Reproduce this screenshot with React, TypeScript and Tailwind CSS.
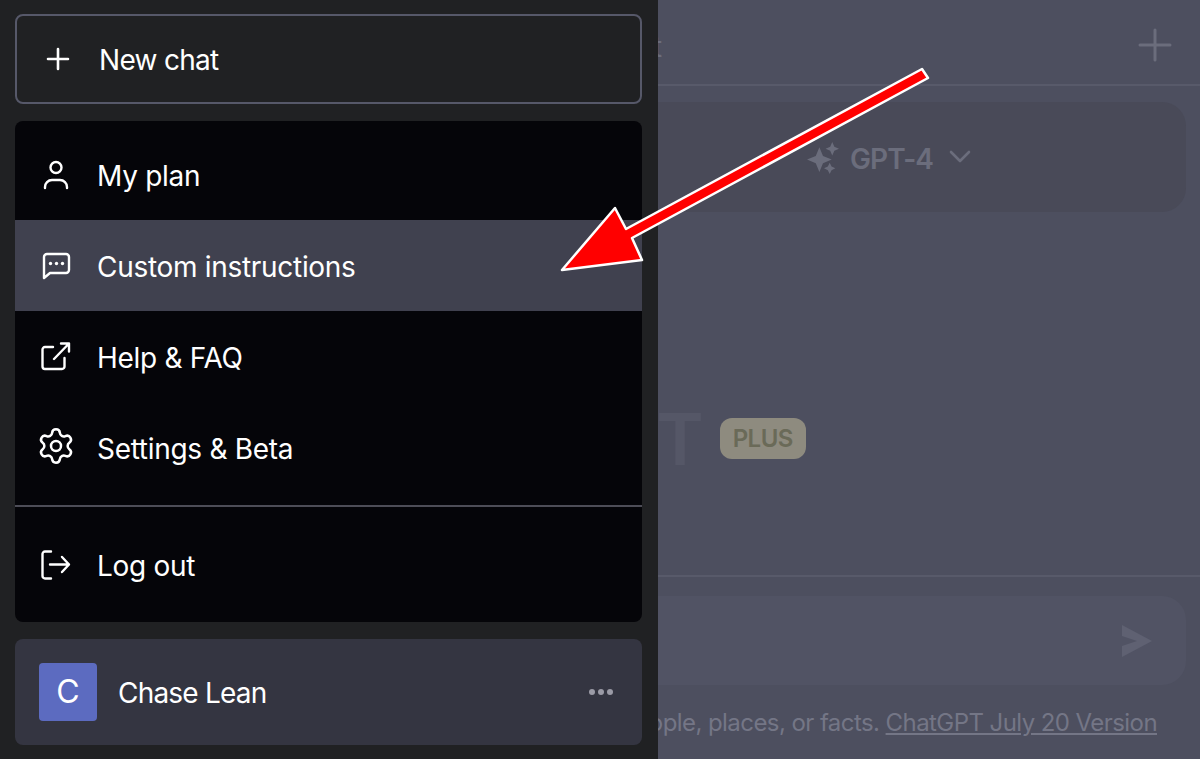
import React from 'react'
import { Settings } from 'lucide-react'

const iconProps = {
  width: 30,
  height: 30,
  viewBox: '0 0 30 30',
  fill: 'none',
  stroke: 'currentColor',
  strokeWidth: 2.4,
  strokeLinecap: 'round' as const,
  strokeLinejoin: 'round' as const
}

const PersonIcon = () => (
  <svg {...iconProps}>
    <circle cx="15" cy="7.500" r="5.500" />
    <path d="M4 28v-1a7 7 0 0 1 7-7h8a7 7 0 0 1 7 7v1" />
  </svg>
)

const ChatIcon = () => (
  <svg {...iconProps}>
    <path d="M3 27V6a3 3 0 0 1 3-3h19a3 3 0 0 1 3 3v13a3 3 0 0 1-3 3H9z" />
    <circle cx="9.500" cy="12.500" r="1.700" fill="currentColor" stroke="none" />
    <circle cx="15.500" cy="12.500" r="1.700" fill="currentColor" stroke="none" />
    <circle cx="21.500" cy="12.500" r="1.700" fill="currentColor" stroke="none" />
  </svg>
)

const ExternalIcon = () => (
  <svg {...iconProps}>
    <path d="M12 5H4a2.500 2.500 0 0 0-2.500 2.500v17A2.500 2.500 0 0 0 4 27h17a2.500 2.500 0 0 0 2.500-2.500V16" />
    <path d="M13 17L28 1.500M20 1.500h8v8" />
  </svg>
)

const LogoutIcon = () => (
  <svg {...iconProps}>
    <path d="M10 1.500H4A2.500 2.500 0 0 0 1.500 4v22A2.500 2.500 0 0 0 4 28.500h6" />
    <path d="M9 14.500h19M21 7l7 7.500-7 7.500" />
  </svg>
)

const menuItems = [
  { label: 'My plan', icon: <PersonIcon /> },
  { label: 'Custom instructions', icon: <ChatIcon />, active: true },
  { label: 'Help & FAQ', icon: <ExternalIcon /> },
  { label: 'Settings & Beta', icon: <Settings size={40} strokeWidth={1.5} className="-mx-1 -mt-[3px] shrink-0" /> }
]

function MenuRow({ label, icon, active }: { label: string; icon: React.ReactNode; active?: boolean }) {
  return (
    <div className={`flex h-[91px] items-center gap-[26px] pl-[26px] ${active ? 'bg-[#40414f]' : ''}`}>
      <span className="flex w-[30px] justify-center">{icon}</span>
      <span className="pt-[2px] text-[28px] tracking-[-0.3px] text-white">{label}</span>
    </div>
  )
}

function Sidebar() {
  return (
    <aside className="relative z-10 flex h-full w-[658px] shrink-0 flex-col bg-[#202123] pl-[15px] pr-[16px] pt-[14px]">
      <div className="flex h-[90px] items-center gap-[29px] rounded-lg border-2 border-[#565869] pl-[29px] text-white">
        <svg width="24" height="24" viewBox="0 0 24 24" stroke="currentColor" strokeWidth="2.6" strokeLinecap="round">
          <path d="M12 2v20M2 12h20" />
        </svg>
        <span className="pt-[2px] text-[28px] tracking-[-0.7px]">New chat</span>
      </div>

      <div className="mt-[17px] flex h-[501px] flex-col overflow-hidden rounded-lg bg-[#050509] pt-[8px] text-white">
        {menuItems.map((item) => (
          <MenuRow key={item.label} {...item} />
        ))}
        <div className="mt-[12px] mb-[12px] h-[2px] bg-[#4d4d57]" />
        <MenuRow label="Log out" icon={<LogoutIcon />} />
      </div>

      <div className="mt-[17px] flex h-[106px] items-center rounded-lg bg-[#343541] pl-[24px] pr-[29px] text-white">
        <div className="flex h-[58px] w-[58px] items-center justify-center rounded-sm bg-[#5c6bc0] text-[32px]">C</div>
        <span className="ml-[21px] flex-1 pt-[2px] text-[28px] tracking-[-0.8px]">Chase Lean</span>
        <div className="flex gap-[3px]">
          <span className="h-[6px] w-[6px] rounded-full bg-[#9b9ba6]" />
          <span className="h-[6px] w-[6px] rounded-full bg-[#9b9ba6]" />
          <span className="h-[6px] w-[6px] rounded-full bg-[#9b9ba6]" />
        </div>
      </div>
    </aside>
  )
}

function Main() {
  return (
    <main className="flex h-full min-w-0 flex-1 flex-col overflow-hidden bg-[#4d4f5f]">
      <header className="flex h-[86px] shrink-0 items-center justify-between border-b-2 border-[#585a6a] pr-[28px] text-[#6b6d7c]">
        <span className="-ml-[116px] mt-[10px] text-[28px] tracking-[-0.7px] whitespace-nowrap">New chat</span>
        <svg width="34" height="34" viewBox="0 0 34 34" stroke="currentColor" strokeWidth="3" strokeLinecap="round" className="mt-[6px]">
          <path d="M17 2v30M2 17h30" />
        </svg>
      </header>

      <div className="mr-[14px] -ml-[60px] mt-[16px] flex h-[110px] shrink-0 items-center gap-[10px] rounded-3xl bg-[#494a58] pl-[209px] text-[#6b6d7c]">
        <svg width="33" height="33" viewBox="0 0 32 32" fill="currentColor" className="mt-[1px]">
          <path d="M12 6l3.500 8.500L24 18l-8.500 3.500L12 30l-3.500-8.500L0 18l8.500-3.500z" />
          <path d="M24.500 1l2 4.500 4.500 2-4.500 2-2 4.500-2-4.500-4.500-2 4.500-2z" />
          <path d="M22 21l1.800 3.700 3.700 1.800-3.700 1.800-1.800 3.700-1.800-3.700-3.700-1.800 3.700-1.800z" />
        </svg>
        <span className="pt-[4px] text-[28px] font-semibold tracking-[-0.9px]">GPT-4</span>
        <svg width="22" height="14" viewBox="0 0 22 14" fill="none" stroke="currentColor" strokeWidth="2.6" strokeLinecap="round" strokeLinejoin="round" className="ml-[6px]">
          <path d="M2 2l9 9 9-9" />
        </svg>
      </div>

      <div className="flex flex-1 items-center pt-[90px]">
        <span className="-ml-[260px] text-[72px] font-semibold tracking-[-1px] text-[#555767] whitespace-nowrap">ChatGPT</span>
        <span className="ml-[17px] flex h-[41px] w-[86px] items-center justify-center rounded-xl bg-[#8e8b7f] text-[24px] font-semibold tracking-[-0.5px] text-[#6a6a58]">PLUS</span>
      </div>

      <div className="flex h-[184px] shrink-0 flex-col border-t-2 border-[#585a6a]">
        <div className="mr-[14px] -ml-[60px] mt-[19px] flex h-[89px] shrink-0 items-center justify-end rounded-3xl bg-[#515364] pr-[33px] text-[#5f6172]">
          <svg width="32" height="34" viewBox="0 0 32 34" fill="currentColor">
            <path d="M1 1l30 16L1 33V22l15-5L1 12z" />
          </svg>
        </div>
        <div className="mt-[20px] flex justify-end pr-[43px]">
          <p className="shrink-0 text-[24px] tracking-[-0.57px] whitespace-nowrap text-[#747686]">
            ChatGPT may produce inaccurate information about people, places, or facts. <u>ChatGPT July 20 Version</u>
          </p>
        </div>
      </div>
    </main>
  )
}

export default function App() {
  return (
    <div className="relative flex h-[759px] w-[1200px] overflow-hidden font-['Inter',sans-serif]">
      <Sidebar />
      <Main />
      {/* annotation arrow drawn over the screenshot */}
      <svg width="1200" height="759" viewBox="0 0 1200 759" className="pointer-events-none absolute inset-0 z-20">
        <polygon
          points="922,69 928,78 632,238 642,260 562,270 615,208 626,229"
          fill="#ff0000"
          stroke="#ffffff"
          strokeWidth="2.5"
          strokeLinejoin="round"
        />
      </svg>
    </div>
  )
}
